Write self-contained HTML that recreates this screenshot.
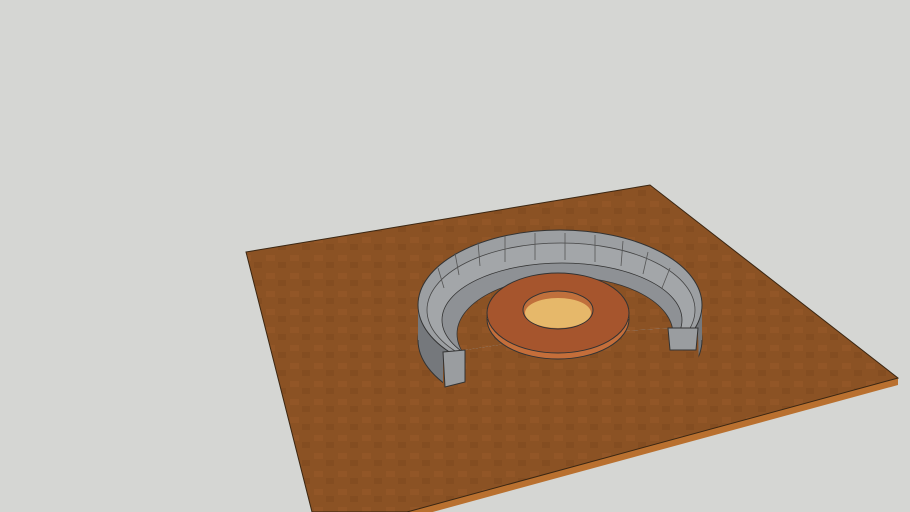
<!DOCTYPE html>
<html><head><meta charset="utf-8"><style>html,body{margin:0;padding:0;background:#d5d6d3;}svg{display:block}</style></head>
<body>
<svg width="910" height="512" viewBox="0 0 910 512" xmlns="http://www.w3.org/2000/svg">
<defs>
<pattern id="tex" width="24" height="18" patternUnits="userSpaceOnUse">
<rect width="24" height="18" fill="#8b5224"/>
<rect x="2" y="3" width="9" height="6" fill="#96592a" opacity="0.6"/>
<rect x="14" y="10" width="8" height="6" fill="#7e481d" opacity="0.5"/>
</pattern>
<clipPath id="wedge"><polygon points="300,150 850,150 850,420 700,420 698,328 668,328 565,335 465,350 443,352 443,420 300,420"/></clipPath>
</defs>
<rect width="910" height="512" fill="#d5d6d3"/>
<polygon points="898,378 898,385 407,519 407,512" fill="#b9702f"/>
<polygon points="246,252 650,185 898,378 407,512 312,512" fill="url(#tex)" stroke="#3a2612" stroke-width="1"/>
<g clip-path="url(#wedge)">
<ellipse cx="560" cy="340" rx="142" ry="75" fill="#75787c" stroke="#333"/>
<rect x="418" y="305" width="284" height="35" fill="#75787c"/>
<ellipse cx="560" cy="305" rx="142" ry="75" fill="#9c9fa2" stroke="#333" stroke-width="1"/>
<ellipse cx="561" cy="310" rx="134" ry="67" fill="#a3a6a9" stroke="#444" stroke-width="0.8"/>
<ellipse cx="562" cy="320" rx="120" ry="57" fill="#8e9195" stroke="#333" stroke-width="0.8"/>
<g stroke="#555" stroke-width="0.8">
<line x1="505" y1="236" x2="505" y2="262"/><line x1="535" y1="233" x2="535" y2="260"/>
<line x1="565" y1="233" x2="565" y2="260"/><line x1="595" y1="235" x2="595" y2="262"/>
<line x1="623" y1="241" x2="621" y2="266"/><line x1="648" y1="252" x2="643" y2="274"/>
<line x1="478" y1="242" x2="480" y2="266"/><line x1="455" y1="253" x2="459" y2="275"/>
<line x1="670" y1="268" x2="662" y2="288"/><line x1="438" y1="268" x2="444" y2="288"/>
</g>
<ellipse cx="565" cy="334" rx="108" ry="57" fill="url(#tex)" stroke="#333" stroke-width="0.8"/>
</g>
<polygon points="443,352 465,350 465,382 445,387" fill="#9a9da0" stroke="#333" stroke-width="1"/>
<polygon points="668,328 698,328 696,350 670,350" fill="#9a9da0" stroke="#333" stroke-width="1"/>
<ellipse cx="558" cy="319" rx="71" ry="40" fill="#c46e3a" stroke="#333" stroke-width="1"/>
<rect x="487" y="313" width="142" height="6" fill="#c46e3a"/>
<ellipse cx="558" cy="313" rx="71" ry="40" fill="#a6552d" stroke="#333" stroke-width="1"/>
<ellipse cx="558" cy="310" rx="35" ry="19" fill="#c0703c" stroke="#333" stroke-width="1"/>
<ellipse cx="558" cy="313" rx="33" ry="15" fill="#e6b86a"/>
</svg>
</body></html>
